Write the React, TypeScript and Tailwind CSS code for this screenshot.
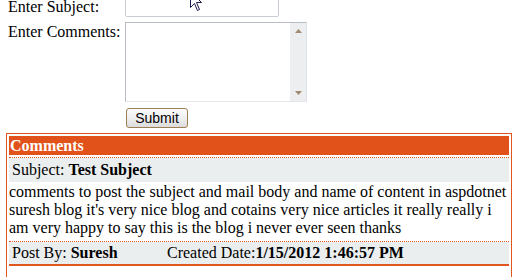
import React from "react";

export default function App() {
  return (
    <div className="relative w-[526px] h-[277px] overflow-hidden bg-white text-black font-['Liberation_Serif',serif] text-[16px] leading-[18px]">
      {/* Form */}
      <div className="-mt-[5px] pl-[8px]">
        <div className="flex h-[22px]">
          <div className="w-[117px] pt-[3px]">Enter Subject:</div>
          <div className="w-[154px] h-[22px] border border-[#c9ccd2] rounded-[2px] bg-white" />
        </div>
        <div className="flex mt-[5px]">
          <div className="w-[117px] pt-[1px]">Enter Comments:</div>
          <div className="flex w-[182px] h-[80px] border border-[#b8bcc4] border-r-[#dfe3e8] border-b-[#e3e7ec] bg-white">
            <div className="flex-1" />
            <div className="w-[16px] h-full bg-[#eceeef] flex flex-col items-center justify-between py-[6px]">
              <svg width="7" height="4" viewBox="0 0 7 4">
                <polygon points="3.5,0 7,4 0,4" fill="#a08a72" />
              </svg>
              <svg width="7" height="4" viewBox="0 0 7 4">
                <polygon points="0,0 7,0 3.5,4" fill="#a08a72" />
              </svg>
            </div>
          </div>
        </div>
        <div className="mt-[6px] pl-[118px]">
          <button className="w-[62px] h-[20px] border border-[#9c7f52] rounded-[3px] bg-gradient-to-b from-[#fbfbfb] via-[#f0f0f0] to-[#dcdcdc] font-['Liberation_Sans',sans-serif] text-[14px] leading-[16px] text-black">
            Submit
          </button>
        </div>
      </div>

      {/* Comments box */}
      <div className="mt-[5px] ml-[6px] w-[506px] border border-[#e0561f] p-[2px] pb-[30px]">
        <div className="h-[19px] bg-[#e1521a] text-white font-bold pl-[1px] leading-[19px]">
          Comments
        </div>
        <div className="mt-[2px] border-t border-dotted border-[#e0561f]" />
        <div className="h-[24px] bg-[#ebeeef] flex items-center pl-[3px]">
          <span>
            Subject: <b>Test Subject</b>
          </span>
        </div>
        <div className="pt-[1px] pb-[4px]">
          comments to post the subject and mail body and name of content in aspdotnet suresh blog it's very nice blog and cotains very nice articles it really really i am very happy to say this is the blog i never ever seen thanks
        </div>
        <div className="border-t border-dotted border-[#e0561f]" />
        <div className="h-[24px] bg-[#ebeeef] flex items-center pl-[3px] border-b-2 border-[#e0561f]">
          <span className="inline-block w-[155px]">
            Post By: <b>Suresh</b>
          </span>
          <span>
            Created Date:<b>1/15/2012 1:46:57 PM</b>
          </span>
        </div>
      </div>

      {/* Mouse cursor */}
      <svg
        className="absolute left-[190px] top-[-9px]"
        width="13"
        height="21"
        viewBox="0 0 13 21"
      >
        <path
          d="M0.5 0.5 L0.5 16.5 L4.5 12.5 L7.5 19.5 L9.5 18.5 L6.5 11.5 L11.5 11.5 Z"
          fill="#ffffff"
          stroke="#1c1c50"
          strokeWidth="1"
        />
      </svg>
    </div>
  );
}
